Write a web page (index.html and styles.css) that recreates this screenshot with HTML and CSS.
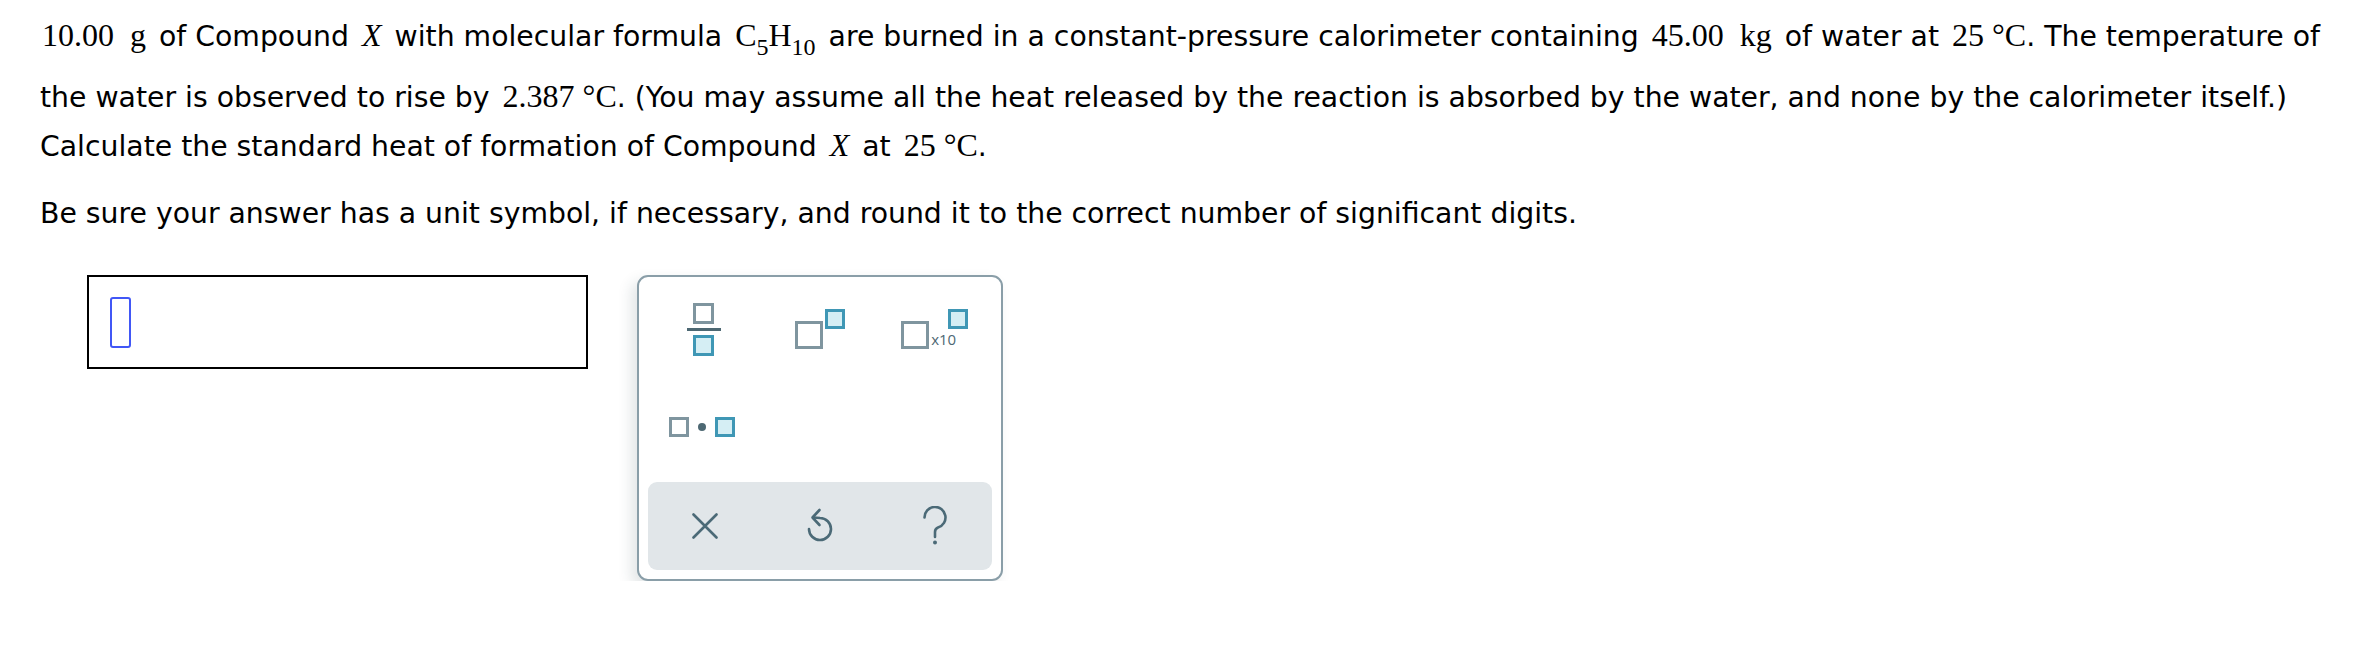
FILE: index.html
```html
<!DOCTYPE html>
<html lang="en">
<head>
<meta charset="utf-8">
<title>Calorimetry question</title>
<link rel="stylesheet" href="styles.css">
</head>
<body>
<div class="page">
  <p class="q q-main"><span class="m m-first">10.00<span class="unit">g</span></span> of Compound <span class="m i">X</span> with molecular formula <span class="m">C<sub class="sub">5</sub>H<sub class="sub">10</sub></span> are burned in a constant-pressure calorimeter containing <span class="m">45.00<span class="unit">kg</span></span> of water at <span class="m m-end">25 °C</span>. The temperature of the water is observed to rise by <span class="m m-end">2.387 °C</span>. (You may assume all the heat released by the reaction is absorbed by the water, and none by the calorimeter itself.) Calculate the standard heat of formation of Compound <span class="m i">X</span> at <span class="m m-end">25 °C</span>.</p>
  <p class="q q-note">Be sure your answer has a unit symbol, if necessary, and round it to the correct number of significant digits.</p>

  <div class="answer-row">
    <div class="answer-box"><span class="cursor"></span></div>

    <div class="keypad">
      <div class="keys">
        <div class="key">
          <div class="frac">
            <span class="sq sq-grey sq-21"></span>
            <span class="frac-bar"></span>
            <span class="sq sq-teal sq-21"></span>
          </div>
        </div>
        <div class="key">
          <div class="sup">
            <span class="sq sq-grey sq-28"></span>
            <span class="sq sq-teal sq-20 sup-box"></span>
          </div>
        </div>
        <div class="key">
          <div class="sup">
            <span class="sq sq-grey sq-28"></span>
            <span class="x10">x10</span>
            <span class="sq sq-teal sq-20 sup-box sup-box-x10"></span>
          </div>
        </div>
        <div class="key">
          <div class="dot-op">
            <span class="sq sq-grey sq-20"></span>
            <span class="dot"></span>
            <span class="sq sq-teal sq-20"></span>
          </div>
        </div>
      </div>
      <div class="actions">
        <div class="action">
          <svg width="26" height="26" viewBox="0 0 26 26"><path d="M1.5 1.5 L24.5 24.5 M24.5 1.5 L1.5 24.5" fill="none" stroke="#4b6a77" stroke-width="2.6" stroke-linecap="round"/></svg>
        </div>
        <div class="action action-undo">
          <svg width="28" height="36" viewBox="0 0 28 36"><path d="M3 22 A11 11 0 1 0 14 11 L7.5 10.5" fill="none" stroke="#4b6a77" stroke-width="2.6" stroke-linecap="round" stroke-linejoin="round"/><path d="M13.5 3 L6.5 10.5 L13.5 18" fill="none" stroke="#4b6a77" stroke-width="2.6" stroke-linecap="round" stroke-linejoin="round"/></svg>
        </div>
        <div class="action">
          <svg width="28" height="40" viewBox="0 0 28 40"><path d="M3.5 11.5 A10.5 10.5 0 1 1 17 21.5 C15 22.3 14 24 14 26 L14 31" fill="none" stroke="#4b6a77" stroke-width="2.6" stroke-linecap="round"/><circle cx="14" cy="36.5" r="2" fill="#4b6a77"/></svg>
        </div>
      </div>
    </div>
  </div>
</div>
</body>
</html>
```

FILE: styles.css
```css
html, body {
  margin: 0;
  padding: 0;
  background: #ffffff;
}

.page {
  padding: 12px 15px 0 40px;
  font-family: "DejaVu Sans", Verdana, sans-serif;
  font-size: 28.3px;
  color: #000000;
}

.q {
  margin: 0;
  line-height: 49px;
}

.q-note {
  margin-top: 18px;
}

.m {
  font-family: "Liberation Serif", "Times New Roman", serif;
  font-size: 32px;
  line-height: 1;
  padding: 0 4px;
}

.m-first {
  padding-left: 2px;
}

.m-end {
  padding-right: 0;
}

.unit {
  margin-left: 16px;
}

.i {
  font-style: italic;
}

.sub {
  font-size: 24px;
  vertical-align: -9px;
  line-height: 52px;
}

.answer-row {
  display: flex;
  align-items: flex-start;
  margin-top: 37px;
  margin-left: 47px;
  gap: 49px;
}

.answer-box {
  box-sizing: border-box;
  width: 501px;
  height: 94px;
  border: 2px solid #000000;
  padding: 20px 0 0 21px;
}

.cursor {
  display: block;
  box-sizing: border-box;
  width: 21px;
  height: 51px;
  border: 2px solid #4157f6;
  border-radius: 3px;
}

.keypad {
  box-sizing: border-box;
  width: 366px;
  height: 306px;
  border: 2px solid #8a9ea8;
  border-radius: 11px;
  padding: 3px 9px 9px;
  background: #ffffff;
  box-shadow: -6px 6px 14px rgba(40, 60, 70, 0.13);
  display: flex;
  flex-direction: column;
}

.keys {
  display: grid;
  grid-template-columns: repeat(3, 1fr);
  grid-auto-rows: 98px;
}

.key {
  display: flex;
  align-items: center;
  justify-content: center;
}

.sq {
  display: block;
  box-sizing: border-box;
  border: 3px solid #7f959f;
  background: #ffffff;
}

.sq-grey {
  border-color: #7f959f;
  background: #ffffff;
}

.sq-teal {
  border-color: #3f97b5;
  background: #d5eef4;
}

.sq-21 { width: 21px; height: 21px; }
.sq-28 { width: 28px; height: 28px; }
.sq-20 { width: 20px; height: 20px; }

.frac {
  display: flex;
  flex-direction: column;
  align-items: center;
  gap: 4px;
  margin-left: -3px;
}

.frac-bar {
  display: block;
  width: 34px;
  height: 3px;
  background: #4d6873;
}

.sup {
  display: flex;
  align-items: flex-end;
  padding-top: 12px;
  position: relative;
}

.sup-box {
  margin-left: 2px;
  align-self: flex-start;
  margin-top: -12px;
}

.x10 {
  font-family: "Open Sans", "Liberation Sans", sans-serif;
  font-size: 15px;
  line-height: 1;
  color: #4d6873;
  margin-left: 2px;
  margin-bottom: 2px;
}

.sup-box-x10 {
  margin-left: -8px;
}

.dot-op {
  display: flex;
  align-items: center;
  gap: 9px;
  margin-left: -6px;
}

.dot {
  display: block;
  width: 8px;
  height: 8px;
  border-radius: 50%;
  background: #4d6873;
}

.actions {
  margin-top: 6px;
  height: 88px;
  border-radius: 9px;
  background: #e1e6e9;
  display: grid;
  grid-template-columns: repeat(3, 1fr);
  align-items: center;
  justify-items: center;
}

.action svg {
  display: block;
}

.action-undo {
  margin-top: -2px;
}
```
